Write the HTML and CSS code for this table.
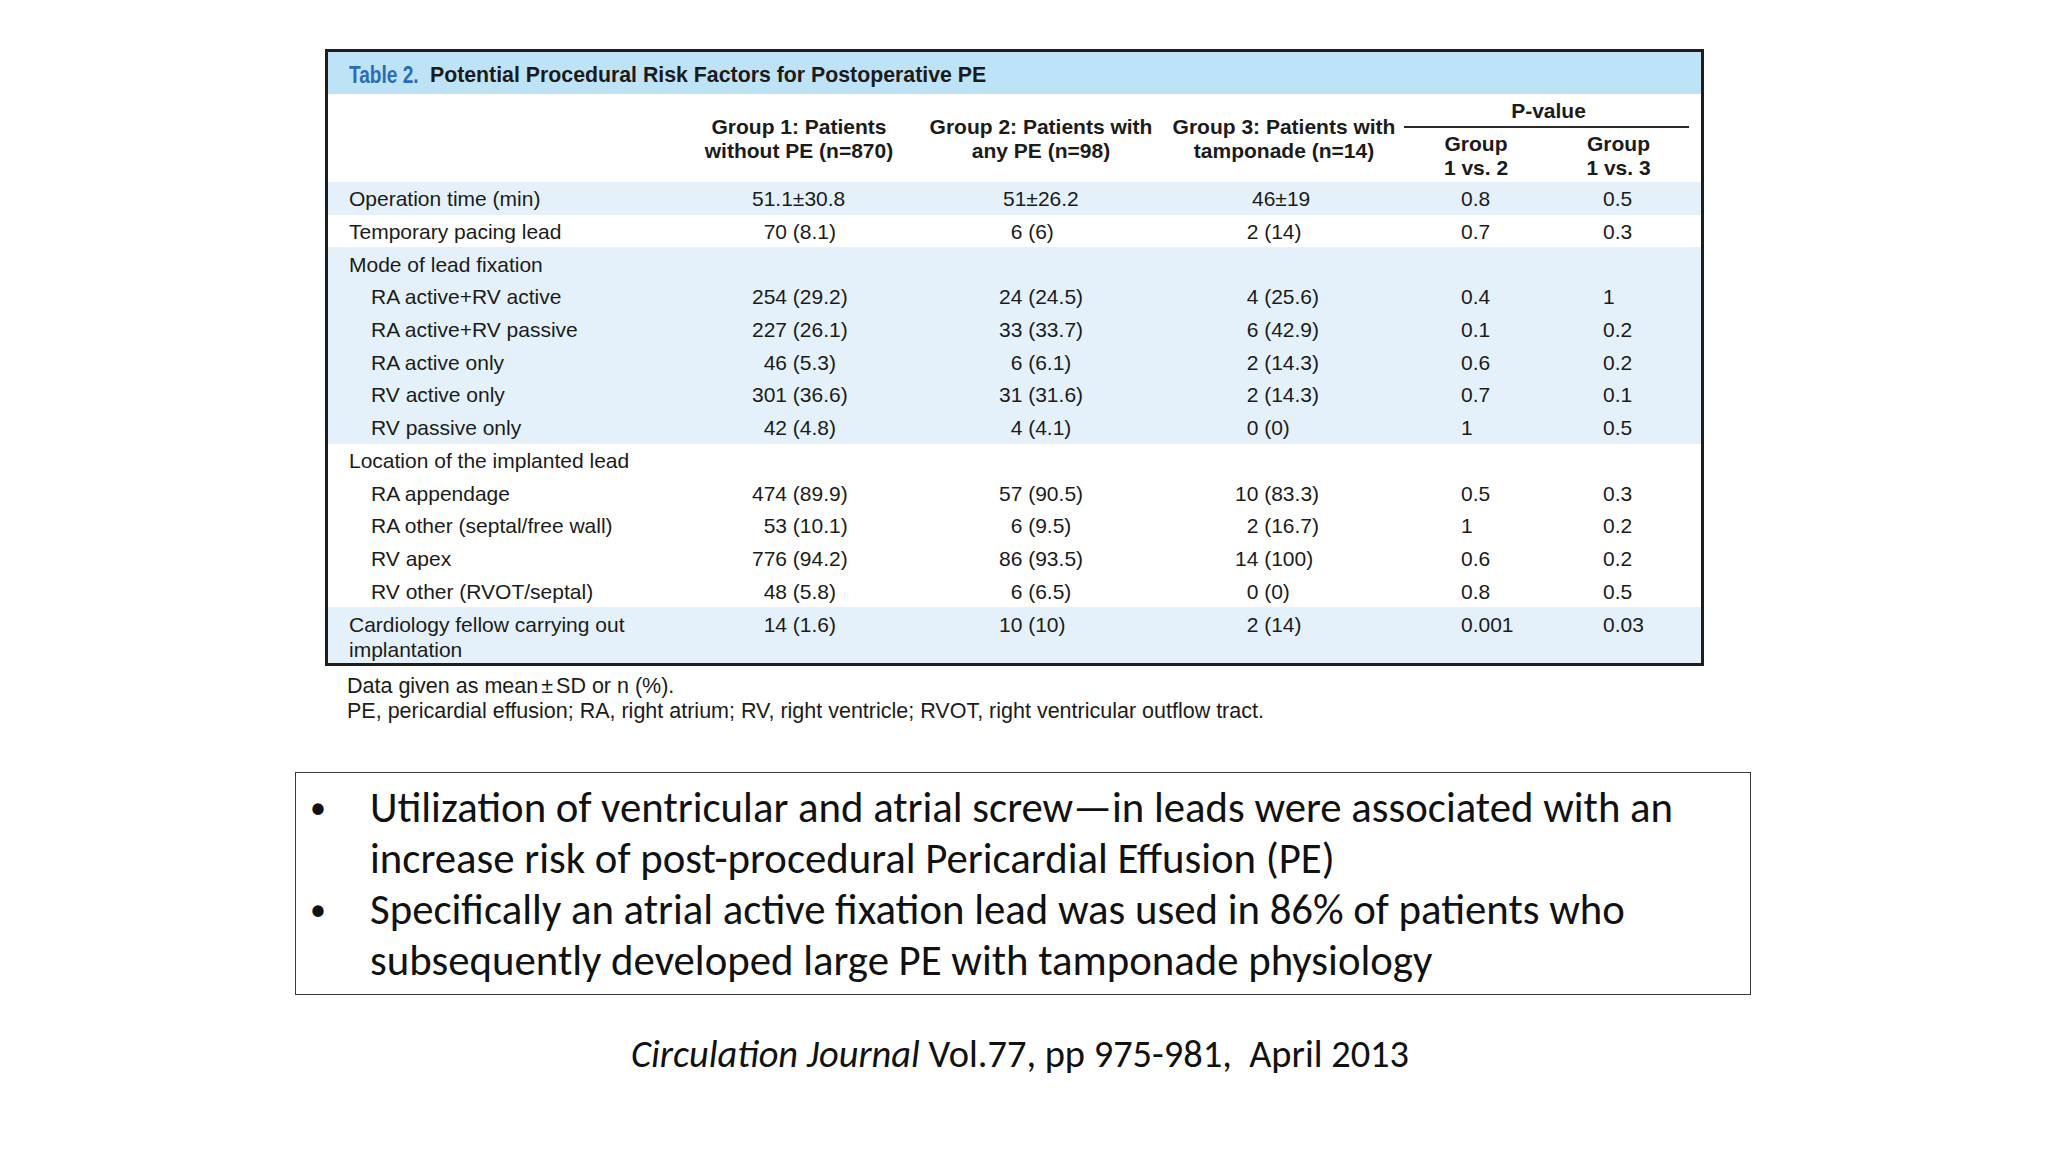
FILE: index.html
```html
<!DOCTYPE html>
<html lang="en">
<head>
<meta charset="utf-8">
<title>Table 2. Potential Procedural Risk Factors for Postoperative PE</title>
<link rel="stylesheet" href="styles.css">
</head>
<body>
<div class="page">
  <div class="tbl">
    <div class="title"><span class="tnum">Table 2.</span>Potential Procedural Risk Factors for Postoperative PE</div>
    <div class="head">
      <div class="hcell"></div>
      <div class="hcell c"><div>Group 1: Patients<br>without PE (n=870)</div></div>
      <div class="hcell c"><div>Group 2: Patients with<br>any PE (n=98)</div></div>
      <div class="hcell c"><div>Group 3: Patients with<br>tamponade (n=14)</div></div>
      <div class="pblock">
        <div class="ptitle">P-value</div>
        <div class="psub">
          <div>Group<br>1 vs. 2</div>
          <div>Group<br>1 vs. 3</div>
        </div>
      </div>
    </div>

    <div class="row blue"><div class="lab">Operation time (min)</div><div class="d1">51.1±30.8</div><div class="d2"><span class="q">51±26.2</span></div><div class="d3"><span class="h">46±19</span></div><div class="d4">0.8</div><div class="d5">0.5</div></div>
    <div class="row"><div class="lab">Temporary pacing lead</div><div class="d1"><span class="f">70 (8.1)</span></div><div class="d2"><span class="f">6 (6)</span></div><div class="d3"><span class="f">2 (14)</span></div><div class="d4">0.7</div><div class="d5">0.3</div></div>

    <div class="grp blue">
      <div class="row"><div class="lab">Mode of lead fixation</div></div>
      <div class="row sub"><div class="lab">RA active+RV active</div><div class="d1">254 (29.2)</div><div class="d2">24 (24.5)</div><div class="d3"><span class="f">4 (25.6)</span></div><div class="d4">0.4</div><div class="d5">1</div></div>
      <div class="row sub"><div class="lab">RA active+RV passive</div><div class="d1">227 (26.1)</div><div class="d2">33 (33.7)</div><div class="d3"><span class="f">6 (42.9)</span></div><div class="d4">0.1</div><div class="d5">0.2</div></div>
      <div class="row sub"><div class="lab">RA active only</div><div class="d1"><span class="f">46 (5.3)</span></div><div class="d2"><span class="f">6 (6.1)</span></div><div class="d3"><span class="f">2 (14.3)</span></div><div class="d4">0.6</div><div class="d5">0.2</div></div>
      <div class="row sub"><div class="lab">RV active only</div><div class="d1">301 (36.6)</div><div class="d2">31 (31.6)</div><div class="d3"><span class="f">2 (14.3)</span></div><div class="d4">0.7</div><div class="d5">0.1</div></div>
      <div class="row sub"><div class="lab">RV passive only</div><div class="d1"><span class="f">42 (4.8)</span></div><div class="d2"><span class="f">4 (4.1)</span></div><div class="d3"><span class="f">0 (0)</span></div><div class="d4">1</div><div class="d5">0.5</div></div>
    </div>

    <div class="grp">
      <div class="row"><div class="lab">Location of the implanted lead</div></div>
      <div class="row sub"><div class="lab">RA appendage</div><div class="d1">474 (89.9)</div><div class="d2">57 (90.5)</div><div class="d3">10 (83.3)</div><div class="d4">0.5</div><div class="d5">0.3</div></div>
      <div class="row sub"><div class="lab">RA other (septal/free wall)</div><div class="d1"><span class="f">53 (10.1)</span></div><div class="d2"><span class="f">6 (9.5)</span></div><div class="d3"><span class="f">2 (16.7)</span></div><div class="d4">1</div><div class="d5">0.2</div></div>
      <div class="row sub"><div class="lab">RV apex</div><div class="d1">776 (94.2)</div><div class="d2">86 (93.5)</div><div class="d3">14 (100)</div><div class="d4">0.6</div><div class="d5">0.2</div></div>
      <div class="row sub"><div class="lab">RV other (RVOT/septal)</div><div class="d1"><span class="f">48 (5.8)</span></div><div class="d2"><span class="f">6 (6.5)</span></div><div class="d3"><span class="f">0 (0)</span></div><div class="d4">0.8</div><div class="d5">0.5</div></div>
    </div>

    <div class="row blue tall"><div class="lab">Cardiology fellow carrying out<br>implantation</div><div class="d1"><span class="f">14 (1.6)</span></div><div class="d2">10 (10)</div><div class="d3"><span class="f">2 (14)</span></div><div class="d4">0.001</div><div class="d5">0.03</div></div>
  </div>

  <div class="notes">
    <div>Data given as mean<span class="pm">±</span>SD or n (%).</div>
    <div>PE, pericardial effusion; RA, right atrium; RV, right ventricle; RVOT, right ventricular outflow tract.</div>
  </div>

  <div class="bullets">
    <div class="bl"><span class="dot">•</span><span class="bt">Utilization of ventricular and atrial screw—in leads were associated with an<br>increase risk of post-procedural Pericardial Effusion (PE)</span></div>
    <div class="bl"><span class="dot">•</span><span class="bt">Specifically an atrial active fixation lead was used in 86% of patients who<br>subsequently developed large PE with tamponade physiology</span></div>
  </div>

  <div class="cite"><em>Circulation Journal</em> Vol.77, pp 975-981,&nbsp; April 2013</div>
</div>
</body>
</html>
```

FILE: styles.css
```css
* { box-sizing: border-box; }
html, body { margin: 0; padding: 0; background: #ffffff; }
.page {
  width: 2048px;
  height: 1152px;
  padding-top: 49px;
  font-family: "Liberation Sans", Arial, sans-serif;
  color: #1b1b1b;
  overflow: hidden;
}
.tbl {
  margin-left: 325px;
  width: 1379px;
  border: 3px solid #1e1e1e;
  font-size: 21px;
}
.title {
  height: 42px;
  background: #bfe3f6;
  display: flex;
  align-items: center;
  padding-left: 21px;
  padding-top: 4px;
  font-weight: bold;
  font-size: 21.3px;
  white-space: pre;
}
.tnum {
  display: inline-block;
  color: #2a6cb4;
  font-weight: bold;
  font-size: 23px;
  transform: scaleX(0.83);
  transform-origin: left center;
  margin-right: -3px;
}
.head, .row {
  display: grid;
  grid-template-columns: 375px 192px 292px 194px 190px 94px 36px;
}
.head {
  height: 88px;
  font-weight: bold;
  line-height: 24.5px;
  padding-top: 2px;
}
.hcell { display: flex; align-items: center; justify-content: center; white-space: nowrap; }
.hcell.c > div { text-align: center; }
.pblock {
  grid-column: 5 / 8;
  padding: 3px 12px 0 23px;
  line-height: 24.5px;
}
.ptitle { text-align: center; padding-left: 4px; }
.psub {
  border-top: 2px solid #2a2a2a;
  margin-top: 2px;
  padding-top: 4px;
  display: grid;
  grid-template-columns: 144px 141px;
  text-align: center;
}
.row {
  height: 32.7px;
  padding-top: 2px;
  align-items: center;
  white-space: nowrap;
}
.blue { background: #e4f1fa; }
.grp .row { background: transparent; }
.lab { padding-left: 21px; }
.sub .lab { padding-left: 43px; }
.d1 { padding-left: 49px; }
.d2 { padding-left: 104px; }
.d3 { padding-left: 48px; }
.d4 { padding-left: 80px; }
.d5 { padding-left: 32px; }
.f { padding-left: 1ch; }
.q { padding-left: 4px; }
.h { padding-left: 17px; }
.row.tall {
  height: 56px;
  align-items: start;
  line-height: 25px;
  padding-top: 5px;
}
.notes {
  margin-left: 347px;
  margin-top: 8px;
  font-size: 21.5px;
  line-height: 25px;
}
.pm { padding: 0 3px; }
.bullets {
  margin-left: 295px;
  margin-top: 48px;
  width: 1456px;
  height: 223px;
  border: 1.5px solid #3a3a3a;
  padding-top: 9px;
  font-family: "Carlito", "Lato", sans-serif;
  font-size: 42.8px;
  line-height: 51px;
  color: #111;
  white-space: nowrap;
}
.bl { display: grid; grid-template-columns: 74px 1fr; }
.dot { padding-left: 14px; font-size: 32px; }
.cite {
  margin-top: 33px;
  text-align: center;
  font-family: "Carlito", "Lato", sans-serif;
  font-size: 38.4px;
  line-height: 51px;
  color: #111;
  padding-right: 8px;
}
```
